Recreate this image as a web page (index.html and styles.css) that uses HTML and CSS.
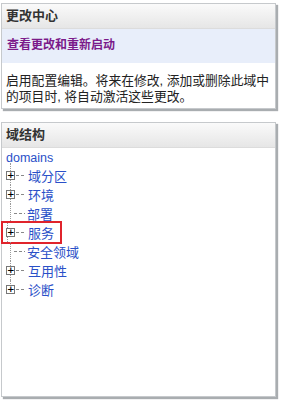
FILE: index.html
```html
<!DOCTYPE html>
<html lang="zh-CN">
<head>
  <meta charset="UTF-8" />
  <title>更改中心</title>
  <link rel="stylesheet" href="styles.css">
</head>
<body>
  <div class="panel">
    <div class="panel-title">更改中心</div>
    <div class="link-row"><a href="#" class="bold-link">查看更改和重新启动</a></div>
    <div class="panel-body">
      <p class="note">启用配置编辑。将来在修改, 添加或删除此域中的项目时, 将自动激活这些更改。</p>
    </div>
  </div>

  <div class="panel tree-panel">
    <div class="panel-title">域结构</div>
    <div class="panel-body tree">
      <a href="#" class="root">domains</a>
      <ul class="tree-list">
        <li><span class="toggle">+</span><span class="dash"></span><a href="#">域分区</a></li>
        <li><span class="toggle">+</span><span class="dash"></span><a href="#">环境</a></li>
        <li class="leaf"><span class="dash"></span><a href="#">部署</a></li>
        <li class="marked"><span class="toggle">+</span><span class="dash"></span><a href="#">服务</a></li>
        <li class="leaf"><span class="dash"></span><a href="#">安全领域</a></li>
        <li><span class="toggle">+</span><span class="dash"></span><a href="#">互用性</a></li>
        <li class="last"><span class="toggle">+</span><span class="dash"></span><a href="#">诊断</a></li>
      </ul>
    </div>
  </div>
</body>
</html>
```

FILE: styles.css
```css
body {
  margin: 0;
  padding: 3px 7px 0 1px;
  font-family: "Liberation Sans", Arial, "Noto Sans CJK SC", sans-serif;
  font-size: 12px;
  color: #222;
  background: #fff;
}
a {
  text-decoration: none;
  color: #2a50c8;
}
.panel {
  border: 1px solid #c6c9cc;
  background: #fff;
  box-shadow: 2px 2px 1px #a9adb0;
  margin-bottom: 13px;
}
.panel-title {
  height: 24px;
  line-height: 24px;
  padding: 0 4px;
  font-size: 13px;
  font-weight: bold;
  color: #333;
  background: linear-gradient(#fafafa, #e6e6e6);
  border-bottom: 1px solid #dcdcdc;
}
.link-row {
  background: #e8eefa;
  padding: 9px 5px 10px;
  line-height: 15px;
}
.bold-link {
  color: #7b1a8a;
  font-weight: bold;
}
.panel-body {
  padding: 0 1px 0 4px;
}
.note {
  margin: 0;
  padding: 10px 0 3px;
  line-height: 16px;
  font-size: 12.8px;
  color: #222;
}
.tree-panel {
  height: 273px;
}
.tree {
  padding-top: 2px;
}
.root {
  display: block;
  line-height: 16px;
  font-size: 12.5px;
}
.tree-list {
  list-style: none;
  margin: 0;
  padding: 0;
}
.tree-list li {
  display: flex;
  align-items: center;
  height: 19px;
  position: relative;
  font-size: 13px;
}
.tree-list li::before {
  content: "";
  position: absolute;
  left: 4px;
  top: 0;
  bottom: 0;
  border-left: 1px dotted #999;
}
.tree-list li:first-child::before {
  top: -3px;
}
.tree-list li.last::before {
  bottom: 50%;
}
.toggle {
  position: relative;
  z-index: 1;
  width: 7px;
  height: 7px;
  border: 1px solid #777;
  background: #fff;
  font-size: 9px;
  line-height: 7px;
  text-align: center;
  color: #000;
  font-family: "DejaVu Sans", sans-serif;
  font-weight: bold;
}
.dash {
  width: 10px;
  height: 1px;
  margin: 0 2px 0 1px;
  background: repeating-linear-gradient(90deg, #888 0 3px, transparent 3px 5px);
}
.leaf .dash {
  margin-left: 8px;
  width: 11px;
}
.marked {
  outline: 2px solid #e0242c;
  width: 54px;
  margin-left: -3px;
  padding-left: 3px;
}
```
